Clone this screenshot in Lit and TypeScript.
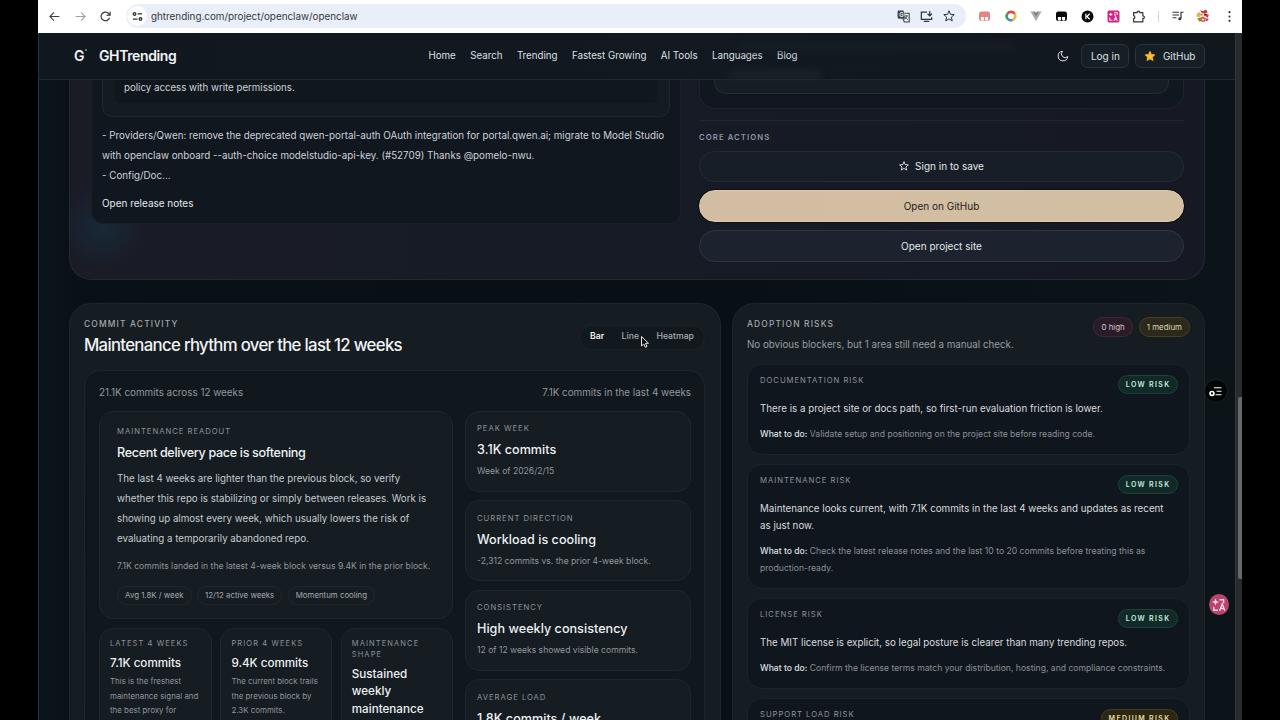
import { LitElement, html, css, svg } from "lit";
import { customElement } from "lit/decorators.js";

const ic = (w: number, vb: number, body: unknown) =>
  html`<svg class="ic" width=${w} height=${w} viewBox="0 0 ${vb} ${vb}">${body}</svg>`;

const star = "M12 2.6l2.9 6.3 6.9.8-5.1 4.7 1.4 6.8L12 17.8l-6.1 3.4 1.4-6.8L2.2 9.7l6.9-.8z";
const sharpStar = "M12 1.500l2.900 7.200 7.600.6-5.800 5 1.800 7.500L12 17.800l-6.500 4 1.800-7.500-5.800-5 7.600-.6z";

const icons = {
  back: ic(13, 24, svg`<path d="M21 12H4M11 4.500L3.500 12l7.500 7.500" fill="none" stroke="#3c4043" stroke-width="2"/>`),
  forward: ic(13, 24, svg`<path d="M3 12h17M13 4.500l7.500 7.500-7.500 7.500" fill="none" stroke="#9aa0a6" stroke-width="2"/>`),
  reload: ic(13, 24, svg`<path d="M19.500 14A8 8 0 1 1 17.700 6.400L20 9" fill="none" stroke="#303337" stroke-width="2.200"/><path d="M20.500 3v6.500H14" fill="none" stroke="#303337" stroke-width="2.200"/>`),
  tune: ic(11, 24, svg`<g fill="none" stroke="#303337" stroke-width="2.800"><circle cx="5.500" cy="6.500" r="2.800"/><path d="M12 6.500H22M2 17.500h10"/><circle cx="18.500" cy="17.500" r="2.800"/></g>`),
  translate: ic(13, 24, svg`<path d="M2 1h10l3 15H4a3 3 0 0 1-3-3V3z" fill="#3f4347"/><text x="4" y="12.500" font-size="11" font-weight="700" fill="#e9eef9">G</text><path d="M13.500 6H22.500v16h-9l-2.500-6" fill="none" stroke="#3f4347" stroke-width="2"/><path d="M14.500 11h6M17.500 9.500V11c0 3-1.500 5-3 6.500M15.500 13c1 2 2.500 3.500 4.500 5" fill="none" stroke="#3f4347" stroke-width="1.500"/>`),
  install: ic(13, 24, svg`<path d="M13 4H2.500v13.500h19v-4M7 21h10" fill="none" stroke="#303337" stroke-width="2.300"/><path d="M18 2v8.500M14 7l4 4 4-4" fill="none" stroke="#303337" stroke-width="2.200"/>`),
  bookmark: ic(12, 24, svg`<path d=${sharpStar} fill="none" stroke="#303337" stroke-width="2"/>`),
  redExt: ic(11, 24, svg`<rect x="0" y="1" width="24" height="21" rx="5" fill="#e88480"/><path d="M4 13h7v5a3.500 3.500 0 0 1-7 0zM13 13h7v5a3.500 3.500 0 0 1-7 0z" fill="#fff"/>`),
  ring: ic(12, 24, svg`<g fill="none" stroke-width="5"><path d="M4.500 7.700A8.600 8.600 0 0 1 19.500 7.700" stroke="#e2473b"/><path d="M19.500 7.700A8.600 8.600 0 0 1 15 20" stroke="#f3b529"/><path d="M15 20a8.600 8.600 0 0 1-8.500-1.300" stroke="#4b83e8"/><path d="M6.500 18.700A8.600 8.600 0 0 1 4.500 7.700" stroke="#36a05a"/></g>`),
  vue: ic(12, 24, svg`<path d="M1 3h5l6 10.500L18 3h5L12 22z" fill="#a6a9a8"/><path d="M6 3h4l2 3.500L14 3h4l-6 10.500z" fill="#737776"/>`),
  blackExt: ic(11, 24, svg`<rect x="0" y="1" width="24" height="21" rx="5" fill="#090909"/><path d="M4 13h7v5a3.500 3.500 0 0 1-7 0zM13 13h7v5a3.500 3.500 0 0 1-7 0z" fill="#fff"/>`),
  roundExt: ic(13, 24, svg`<circle cx="12" cy="12" r="11" fill="#0a0a0a"/><path d="M9 7v10M16 7l-5 5 5 5" fill="none" stroke="#fff" stroke-width="2.200"/>`),
  pinkExt: ic(13, 24, svg`<rect x="1" y="1" width="22" height="22" rx="3" fill="#d2247f"/><g fill="none" stroke="#ffe3f1" stroke-width="2"><path d="M4 8h6M7 5v6M13 5h6v4M13 9h3M5 14v5h5M13 20l3-8 3 8M14 17.500h4"/></g>`),
  puzzle: ic(13, 24, svg`<path d="M3 5h6.500V4.500a2.500 2.500 0 0 1 5 0V5H20v6h.5a2.300 2.300 0 0 1 0 4.600H20V22H3v-6a2.800 2.800 0 0 0 0-5.500z" fill="none" stroke="#303337" stroke-width="2.200" stroke-linejoin="round"/>`),
  music: ic(12, 24, svg`<path d="M1 4.500h13M1 10h13M1 15.500h8" stroke="#303337" stroke-width="2.200"/><path d="M18 17V4.500h5" fill="none" stroke="#303337" stroke-width="2.400"/><circle cx="15.500" cy="17.500" r="3" fill="#303337"/>`),
  avatar: ic(14, 24, svg`<circle cx="12" cy="12" r="10" fill="#f9f1e8"/><path d="M7 2l5 2 5-3 3 4-4 3-6-1z" fill="#c93434"/><path d="M1 8l5-3 3 4-3 5-5-1z" fill="#e0b84b"/><path d="M7 15l5-2 5 3-2 6-6 0z" fill="#e0524e"/><path d="M17 8l5 2-2 5-3-2z" fill="#d72d56"/><path d="M2 16l5-1 3 5-4 2z" fill="#8a8f2e"/><path d="M18 16l4 1-3 4-3-1z" fill="#c6405a"/><circle cx="15.500" cy="10" r="1.800" fill="#5a1a22"/><circle cx="10" cy="10" r="1.300" fill="#a53038"/><circle cx="12" cy="18" r="1.600" fill="#fff"/>`),
  dots: ic(13, 24, svg`<circle cx="12" cy="4" r="2" fill="#303337"/><circle cx="12" cy="12" r="2" fill="#303337"/><circle cx="12" cy="20" r="2" fill="#303337"/>`),
  moon: ic(12, 24, svg`<path d="M11 2.500A7 7 0 0 0 21.500 13 9.600 9.600 0 1 1 11 2.500z" fill="none" stroke="#dfe3e7" stroke-width="2" stroke-linejoin="round"/>`),
  gold: ic(12, 24, svg`<path d=${star} fill="#fbbf24" stroke="#fbbf24" stroke-width="1.500" stroke-linejoin="round"/>`),
  save: ic(10, 24, svg`<path d=${sharpStar} fill="none" stroke="#e3e6ec" stroke-width="2.200" stroke-linejoin="round"/>`),
  list: ic(13, 24, svg`<g fill="none" stroke="#fff" stroke-width="2"><path d="M9 5h14M14 11.500h9M12 18h11"/><circle cx="5.500" cy="15.500" r="3.600" stroke-width="3"/></g>`),
  ai: ic(14, 24, svg`<path d="M6 1l1.700 4.300L12 7 7.700 8.700 6 13 4.300 8.700 0 7l4.300-1.700z" fill="#fbdbe6"/><g fill="none" stroke="#fbdbe6" stroke-width="2.200"><path d="M13 3h7v6M3 15v6h7"/><path d="M13 22l4.500-12L22 22M14.500 18h6"/></g>`),
};

const stats = [
  ["PEAK WEEK", "3.1K commits", "Week of 2026/2/15"],
  ["CURRENT DIRECTION", "Workload is cooling", "-2,312 commits vs. the prior 4-week block."],
  ["CONSISTENCY", "High weekly consistency", "12 of 12 weeks showed visible commits."],
  ["AVERAGE LOAD", "1.8K commits / week", ""],
];

const blocks = [
  [["LATEST 4 WEEKS"], ["7.1K commits"], ["This is the freshest", "maintenance signal and", "the best proxy for"]],
  [["PRIOR 4 WEEKS"], ["9.4K commits"], ["The current block trails", "the previous block by", "2.3K commits."]],
  [["MAINTENANCE", "SHAPE"], ["Sustained", "weekly", "maintenance"], []],
];

const risks = [
  { name: "DOCUMENTATION RISK", level: "LOW RISK", text: ["There is a project site or docs path, so first-run evaluation friction is lower."], todo: ["Validate setup and positioning on the project site before reading code."] },
  { name: "MAINTENANCE RISK", level: "LOW RISK", text: ["Maintenance looks current, with 7.1K commits in the last 4 weeks and updates as recent", "as just now."], todo: ["Check the latest release notes and the last 10 to 20 commits before treating this as", "production-ready."] },
  { name: "LICENSE RISK", level: "LOW RISK", text: ["The MIT license is explicit, so legal posture is clearer than many trending repos."], todo: ["Confirm the license terms match your distribution, hosting, and compliance constraints."] },
  { name: "SUPPORT LOAD RISK", level: "MEDIUM RISK", text: [], todo: [] },
];

const lines = (l: string[]) => l.map((t, i) => (i ? html`<br />${t}` : t));

@customElement("app-root")
export class AppRoot extends LitElement {
  static styles = css`
    :host { display: block; width: 1280px; height: 720px; overflow: hidden; background: #000; font-family: Inter, "Liberation Sans", sans-serif; font-size: 9.8px; color: #d5dade; white-space: nowrap; }
    * { box-sizing: border-box; }
    .ic { display: block; flex: none; overflow: visible; }
    .window { position: relative; width: 1204px; height: 720px; margin-left: 38px; display: flex; flex-direction: column; }
    .bar { height: 33px; flex: none; background: #fff; display: flex; align-items: center; padding: 0 0 1px 9px; }
    .cell { width: 25.7px; flex: none; display: flex; justify-content: center; align-items: center; }
    .cell.narrow { width: 15px; }
    .cell.wide { width: 36px; }
    .omni { width: 840px; height: 24px; margin: 0 6px 0 13px; border-radius: 12px; background: #e9eef9; display: flex; align-items: center; padding: 0 11px 0 1px; flex: none; }
    .tune { width: 20px; height: 20px; border-radius: 50%; background: #fdfdff; display: grid; place-items: center; }
    .url { flex: 1; margin-left: 4px; color: #35383c; font-size: 9.86px; }
    .tools { display: flex; gap: 10px; align-items: center; }
    .sep { width: 1px; height: 11px; background: #ccd5ee; margin: 0 7px 0 6px; }
    .screen { display: flex; flex: 1; min-height: 0; }
    .page { width: 1197px; background: linear-gradient(90deg, #0b151b 0, #091117 3%, #081016 55%, #0a1419 100%); border-left: 1px solid #17394d; overflow: hidden; }
    .track { width: 7px; background: #292a2b; border-left: 1px solid #353637; padding: 364px 0 0 2px; }
    .thumb { height: 182px; background: #666768; border-radius: 2px 0 0 2px; }
    .nav { position: relative; height: 47px; background: linear-gradient(90deg, #10171e, #121920 60%, #10181e); border-bottom: 1px solid #20292f; padding: 0 30px 0 35px; display: grid; grid-template-columns: 354.500px 1fr auto; align-items: center; }
    .smudge { position: absolute; left: 690px; bottom: 0; width: 92px; height: 9px; background: #1a2329; filter: blur(3px); }
    .smudge.two { left: 700px; bottom: 28px; width: 276px; height: 10px; background: #151d23; }
    .brand { display: flex; align-items: center; color: #f2f4f5; font-weight: 600; }
    .g { font-size: 14px; width: 25px; position: relative; }
    .g i { position: absolute; left: 11px; top: 2px; width: 2px; height: 2px; border-radius: 50%; background: #43b6b4; }
    .name { font-size: 14px; letter-spacing: -0.38px; }
    .brand, .links { margin-top: -1px; }
    .links { display: flex; gap: 14.400px; color: #dde1e4; font-size: 9.74px; }
    .right { display: flex; align-items: center; gap: 6px; color: #dde1e4; }
    .right .ic { margin-right: 6px; }
    .btn { height: 24px; border: 1px solid #2a3239; border-radius: 6px; background: #171f26; padding: 0 8.500px; display: flex; align-items: center; font-size: 10px; }
    .btn .ic { margin-right: 6.500px; margin-left: -0.500px; }
    .main { padding-left: 30px; width: 1166px; }
    .hero { height: 200px; border: 1px solid #232a33; border-top: 0; border-radius: 0 0 22px 22px; display: grid; grid-template-columns: 590px 485px; column-gap: 18px; padding-left: 21px;
      background: radial-gradient(circle at 32px 146px, #182938 0, #18293800 44px), linear-gradient(90deg, #1a1b25, #191c26 10%, #161b26 50%, #161924); }
    .release { height: 144px; background: #10171f; border: 1px solid #192229; border-top: 0; border-radius: 0 0 12px 12px; padding: 0 10px; line-height: 20px; color: #ced3d9; }
    .quote { height: 37px; border: 1px solid #1e272d; border-top: 0; border-radius: 0 0 10px 10px; background: #141c22; padding: 0 12px 13px; }
    .code { height: 23px; background: #10181e; border-radius: 0 0 5px 5px; padding: 0 9px; line-height: 15px; font-size: 9.7px; }
    .notes { margin-top: 9px; font-size: 9.79px; }
    .open { margin-top: 7px; color: #e5e9ec; font-size: 9.96px; }
    .scores { height: 29px; border: 1px solid #1c252c; border-top: 0; border-radius: 0 0 16px 16px; background: #10171f; padding: 0 14px; }
    .pill { height: 14px; border: 1px solid #222d33; border-top: 0; border-radius: 0 0 12px 12px; background: #151e24; }
    .actions { margin-top: 11px; border-top: 1px solid #20272f; padding-top: 11px; }
    .label { font-size: 7.7px; letter-spacing: 0.96px; line-height: 12px; color: #8d949a; }
    .label.core { font-weight: 600; letter-spacing: 1.1px; color: #8f96a2; margin-bottom: 7px; }
    .label.head { font-size: 8.4px; letter-spacing: 1.17px; font-weight: 500; color: #a2a8ad; }
    .act { height: 31px; border: 1px solid #232c34; border-radius: 16px; background: #181e27; display: flex; align-items: center; justify-content: center; gap: 6px; font-size: 10px; color: #e3e6ec; margin-top: 8px; padding-bottom: 1px; }
    .label + .act { margin-top: 0; }
    .act.gold { height: 32px; padding-bottom: 0; background: linear-gradient(90deg, #d3bda2, #d2bfa2); color: #1d1c1b; border-color: #dccbb0; box-shadow: 0 0 0 1px #0c0e12; }
    .act.site { height: 32px; padding-bottom: 0; background: #1d232e; border-color: #2f3540; }
    .cols { display: grid; grid-template-columns: 652px 473px; gap: 11px; margin-top: 23px; height: 440px; }
    .card { border: 1px solid #1e262c; border-radius: 22px; background: linear-gradient(180deg, #161d22, #151c23); padding: 14px; height: 440px; }
    .top { display: flex; justify-content: space-between; }
    .h { font-size: 16.8px; line-height: 22px; margin-top: 4px; font-weight: 500; letter-spacing: -0.7px; color: #eff2f3; }
    .tabs { width: 126px; height: 25px; margin: 6.500px 1px 0 0; border: 1px solid #1b2329; border-radius: 13px; background: #11181e; display: flex; align-items: center; justify-content: space-between; padding: 0 10px 2px 10px; font-size: 8.7px; font-weight: 500; color: #a8adb1; }
    .tabs b { font-weight: 600; color: #eceff0; }
    .panel { width: 621px; margin-top: 14px; height: 380px; border: 1px solid #1d262c; border-radius: 16px; background: #10171d; padding: 13px 13px 0 14px; }
    .sum { display: flex; justify-content: space-between; line-height: 16px; color: #92989d; font-size: 9.85px; }
    .grid { display: grid; grid-template-columns: 354px 226px; gap: 12px; margin-top: 10.500px; }
    .box { border: 1px solid #1e272d; border-radius: 14px; background: #151c22; }
    .read { height: 208px; padding: 14px 17px; }
    .t { font-size: 12.6px; font-weight: 500; color: #eef1f2; }
    .read .t { line-height: 18px; margin-top: 6px; letter-spacing: -0.34px; }
    .p { line-height: 20px; margin-top: 7px; color: #c7ccd0; font-size: 9.75px; }
    .s { font-size: 8.6px; line-height: 15px; color: #91979c; }
    .read .s { margin-top: 10px; }
    .tags { display: flex; gap: 5.500px; margin-top: 12px; }
    .tag { height: 19px; border: 1px solid #20292f; border-radius: 10px; font-size: 7.85px; display: flex; align-items: center; padding: 0 7px; color: #a5abaf; }
    .trio { display: grid; grid-template-columns: 113px 112px 112px; gap: 8.400px; margin-top: 9px; }
    .mini { height: 120px; padding: 9px 10px; }
    .mini .label { line-height: 11px; letter-spacing: 1.1px; font-size: 7.5px; }
    .mini .t { font-size: 11.65px; line-height: 17.500px; margin-top: 6.300px; }
    .mini .s { font-size: 7.92px; line-height: 14.400px; margin-top: 2px; }
    .stats { display: grid; grid-template-rows: repeat(4, 81px); row-gap: 8.600px; height: 300px; }
    .stat { padding: 11.500px 11px; }
    .stat .t { line-height: 19px; margin-top: 5px; letter-spacing: 0.03px; }
    .stat .s { margin-top: 5px; }
    .desc { color: #979da2; line-height: 16px; margin-top: 7px; font-size: 9.78px; }
    .badges { display: flex; gap: 6px; margin-top: -1px; height: 20px; }
    .badge { height: 20px; border-radius: 10px; border: 1px solid #402637; background: #291b28; color: #d9c4ce; font-size: 7.9px; display: flex; align-items: center; padding: 0 7px; }
    .badge.mid { border-color: #454020; background: #2a291a; color: #ded7b4; }
    .risks { display: grid; gap: 9.300px; margin-top: 11px; width: 443px; }
    .risk { border: 1px solid #1b242a; border-radius: 15px; background: #10161d; padding: 10px 11.500px 11px 12px; }
    .risk + .risk { margin-top: 0; }
    .lvl { height: 19px; border-radius: 10px; border: 1px solid #1b433b; background: #112a29; color: #c9eadf; font-size: 7px; font-weight: 600; letter-spacing: 1.35px; display: flex; align-items: center; padding: 0 6px 0 7px; }
    .lvl.mid { border-color: #453e1a; background: #2b2713; color: #e6dca0; }
    .rt { line-height: 17.200px; margin-top: 5.700px; color: #d8dcdf; font-size: 9.78px; }
    .todo { line-height: 17px; margin-top: 8.800px; font-size: 8.62px; color: #8a9096; }
    .todo b { font-weight: 500; color: #dde1e4; }
    .float { position: absolute; border-radius: 50%; display: grid; place-items: center; }
    .f1 { left: 1165.500px; top: 379px; width: 24px; height: 24px; background: #020303; border: 1px solid #1d2427; }
    .f2 { left: 1171px; top: 594px; width: 20px; height: 21px; background: #b9446e; }
    .cursor { position: absolute; left: 602px; top: 335px; }
  `;

  render() {
    return html`
      <div class="window">
        <div class="bar">
          <span class="cell narrow">${icons.back}</span>
          <span class="cell wide">${icons.forward}</span>
          <span class="cell narrow">${icons.reload}</span>
          <div class="omni"><span class="tune">${icons.tune}</span><span class="url">ghtrending.com/project/openclaw/openclaw</span>
            <span class="tools">${icons.translate}${icons.install}${icons.bookmark}</span></div>
          ${[icons.redExt, icons.ring, icons.vue, icons.blackExt, icons.roundExt, icons.pinkExt, icons.puzzle].map((i) => html`<span class="cell">${i}</span>`)}
          <span class="sep"></span>
          ${[icons.music, icons.avatar, icons.dots].map((i) => html`<span class="cell">${i}</span>`)}
        </div>
        <div class="screen">
          <div class="page">
            <nav class="nav">
              <span class="smudge"></span><span class="smudge two"></span>
              <div class="brand"><span class="g">G<i></i></span><span class="name">GHTrending</span></div>
              <div class="links">${["Home", "Search", "Trending", "Fastest Growing", "AI Tools", "Languages", "Blog"].map((l) => html`<span>${l}</span>`)}</div>
              <div class="right">${icons.moon}<span class="btn">Log in</span><span class="btn">${icons.gold}GitHub</span></div>
            </nav>
            <div class="main">
              <section class="hero">
                <div class="release">
                  <div class="quote"><div class="code">policy access with write permissions.</div></div>
                  <div class="notes">- Providers/Qwen: remove the deprecated qwen-portal-auth OAuth integration for portal.qwen.ai; migrate to Model Studio<br />with openclaw onboard --auth-choice modelstudio-api-key. (#52709) Thanks @pomelo-nwu.<br />- Config/Doc...</div>
                  <div class="open">Open release notes</div>
                </div>
                <div>
                  <div class="scores"><div class="pill"></div></div>
                  <div class="actions">
                    <div class="label core">CORE ACTIONS</div>
                    <div class="act">${icons.save}Sign in to save</div>
                    <div class="act gold">Open on GitHub</div>
                    <div class="act site">Open project site</div>
                  </div>
                </div>
              </section>
              <div class="cols">
                <section class="card">
                  <div class="top">
                    <div><div class="label head">COMMIT ACTIVITY</div><div class="h">Maintenance rhythm over the last 12 weeks</div></div>
                    <div class="tabs"><b>Bar</b><span>Line</span><span>Heatmap</span></div>
                  </div>
                  <div class="panel">
                    <div class="sum"><span>21.1K commits across 12 weeks</span><span>7.1K commits in the last 4 weeks</span></div>
                    <div class="grid">
                      <div>
                        <div class="box read">
                          <div class="label">MAINTENANCE READOUT</div>
                          <div class="t">Recent delivery pace is softening</div>
                          <div class="p">${lines(["The last 4 weeks are lighter than the previous block, so verify", "whether this repo is stabilizing or simply between releases. Work is", "showing up almost every week, which usually lowers the risk of", "evaluating a temporarily abandoned repo."])}</div>
                          <div class="s">7.1K commits landed in the latest 4-week block versus 9.4K in the prior block.</div>
                          <div class="tags"><span class="tag">Avg 1.8K / week</span><span class="tag">12/12 active weeks</span><span class="tag">Momentum cooling</span></div>
                        </div>
                        <div class="trio">${blocks.map(([a, b, c]) => html`<div class="box mini"><div class="label">${lines(a)}</div><div class="t">${lines(b)}</div><div class="s">${lines(c)}</div></div>`)}</div>
                      </div>
                      <div class="stats">${stats.map(([a, b, c]) => html`<div class="box stat"><div class="label">${a}</div><div class="t">${b}</div><div class="s">${c}</div></div>`)}</div>
                    </div>
                  </div>
                </section>
                <section class="card">
                  <div class="top">
                    <div><div class="label head">ADOPTION RISKS</div><div class="desc">No obvious blockers, but 1 area still need a manual check.</div></div>
                    <div class="badges"><span class="badge">0 high</span><span class="badge mid">1 medium</span></div>
                  </div>
                  <div class="risks">${risks.map((r) => html`<div class="risk">
                    <div class="top"><div class="label">${r.name}</div><span class="lvl ${r.level[0] === "M" ? "mid" : ""}">${r.level}</span></div>
                    <div class="rt">${lines(r.text)}</div>
                    ${r.todo.length ? html`<div class="todo"><b>What to do:</b> ${lines(r.todo)}</div>` : ""}</div>`)}</div>
                </section>
              </div>
            </div>
          </div>
          <div class="track"><div class="thumb"></div></div>
        </div>
        <div class="float f1">${icons.list}</div>
        <div class="float f2">${icons.ai}</div>
        <svg class="cursor" width="10" height="14" viewBox="0 0 10 14"><path d="M1.500 1.500v9.500l2.300-2 1.500 3.300 1.700-.8-1.500-3.200h3z" fill="#111" stroke="#e8e8e8" stroke-width="1"/></svg>
      </div>`;
  }
}
